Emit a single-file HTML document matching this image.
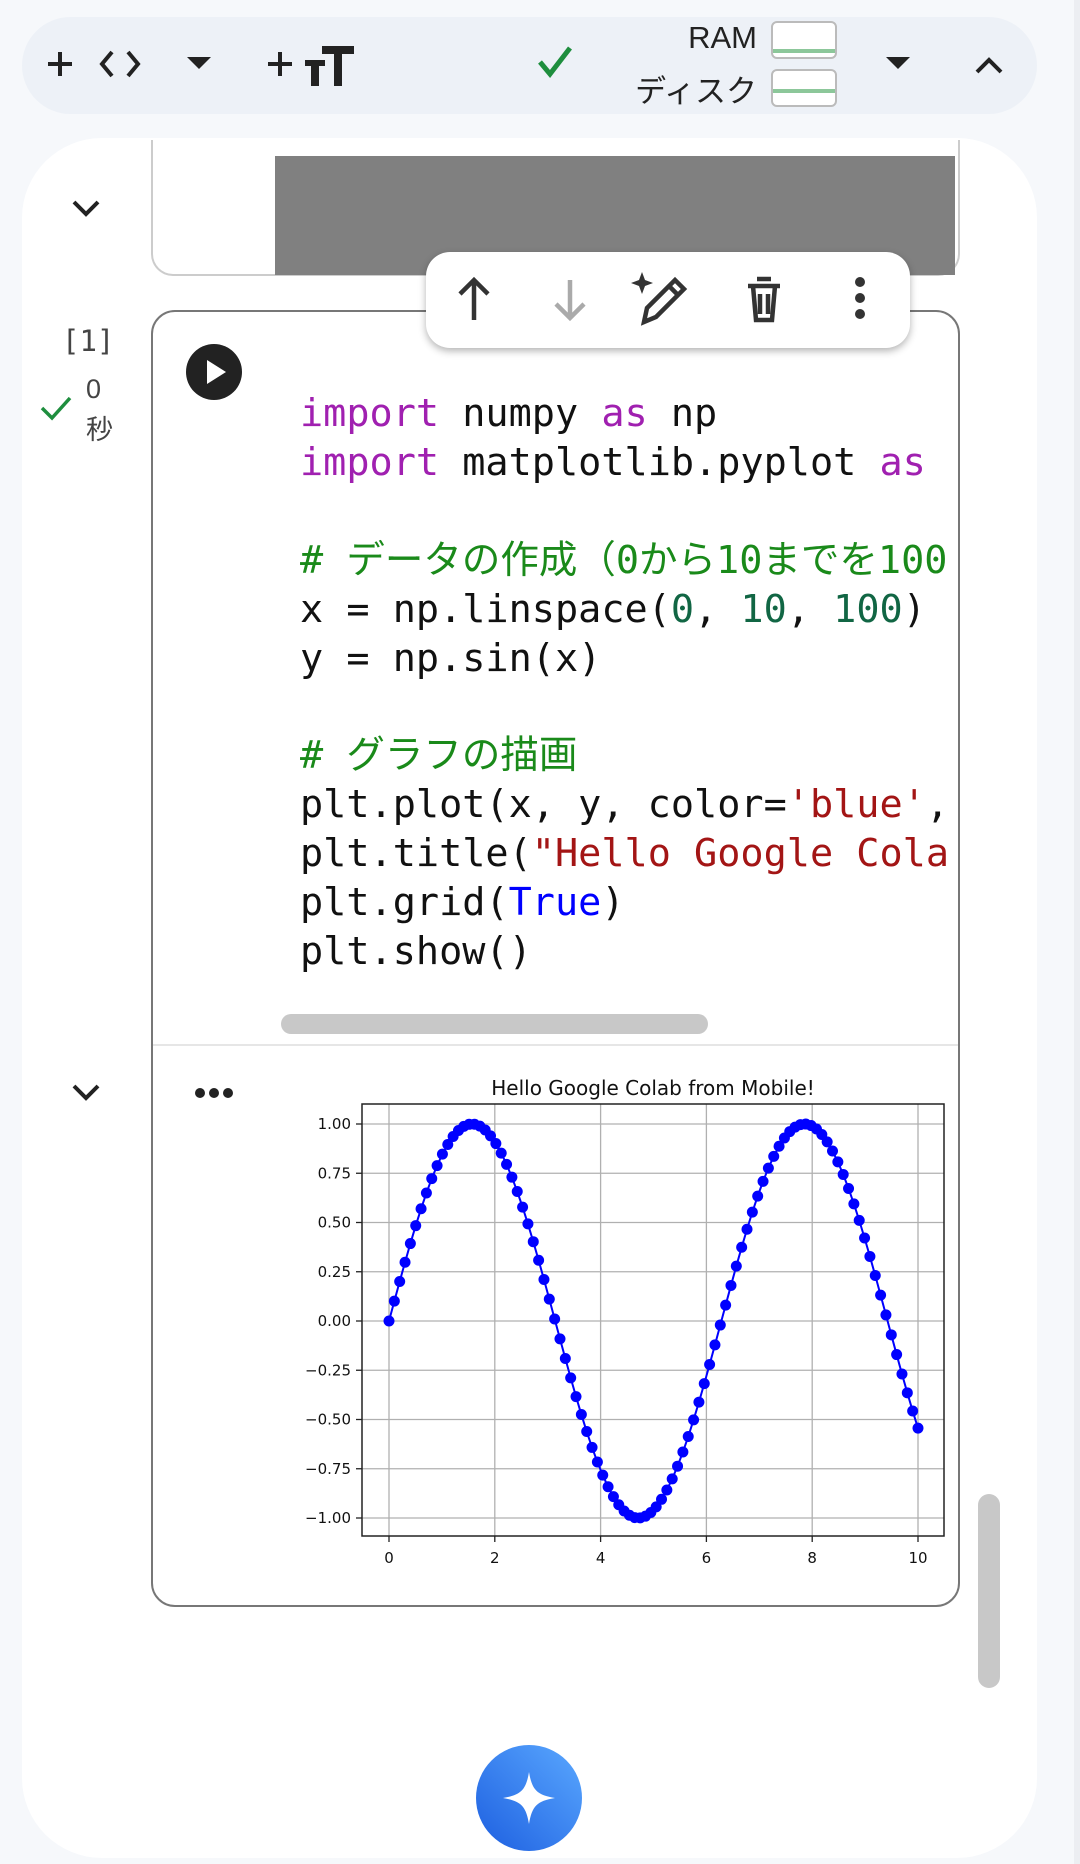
<!DOCTYPE html>
<html><head><meta charset="utf-8"><style>
*{margin:0;padding:0;box-sizing:border-box}
body{width:1080px;height:1864px;background:#f6f8fb;position:relative;overflow:hidden;font-family:"Liberation Sans","Noto Sans CJK JP",sans-serif;color:#222}
.abs{position:absolute}
.top{left:22px;top:17px;width:1015px;height:97px;border-radius:49px;background:#edf1f7}
.card{left:22px;top:138px;width:1015px;height:1720px;border-radius:80px;background:#fff}
.code{left:300px;top:390px;font-family:"DejaVu Sans Mono","Noto Sans CJK JP",monospace;font-size:38.5px;line-height:48.9px;white-space:pre;color:#111}
.k{color:#a020b0}.c{color:#1a8a1a}.n{color:#116644}.s{color:#a31515}.b{color:#0000ff}
</style></head><body>
<div class="abs" style="left:1074px;top:0;width:6px;height:1864px;background:#eceef2"></div>
<div class="abs top"></div>
<svg class="abs" style="left:0;top:0" width="1080" height="130">
<g stroke="#222" stroke-width="4" fill="none">
<path d="M48 64h24M60 52v24"/><path d="M112 52l-10 12 10 12M128 52l10 12-10 12"/>
<path d="M268 64h24M280 52v24"/>
<path d="M540 62l10 12 20-26" stroke="#1e8e3e" stroke-width="5"/>
<path d="M977 72l12-12 12 12" stroke-width="4"/>
</g>
<path d="M187 57h24l-12 12z M886 57h24l-12 12z" fill="#222"/>
<path d="M305 60h20v6h-6v20h-8v-20h-6z M322 46h32v8h-12v32h-8v-32h-12z" fill="#222"/>
<rect x="772" y="22" width="64" height="36" rx="5" fill="#fff" stroke="#bbb" stroke-width="2"/>
<rect x="773" y="49" width="62" height="4" fill="#8cc79a"/>
<rect x="772" y="70" width="64" height="36" rx="5" fill="#fff" stroke="#bbb" stroke-width="2"/>
<rect x="773" y="89" width="62" height="4" fill="#8cc79a"/>
</svg>
<div class="abs" style="right:323px;top:20px;font-size:31px">RAM</div>
<div class="abs" style="right:323px;top:66px;font-size:31px">ディスク</div>
<div class="abs card"></div>
<div class="abs" style="left:151px;top:140px;width:809px;height:136px;border:2px solid #ccc;border-top:none;border-radius:0 0 22px 22px"></div>
<div class="abs" style="left:275px;top:156px;width:680px;height:119px;background:#808080"></div>
<svg class="abs" style="left:0;top:0" width="200" height="1200"><g stroke="#222" stroke-width="4" fill="none"><path d="M74 202l12 12 12-12"/><path d="M74 1086l12 12 12-12"/><path d="M42 408l10 10 18-20" stroke="#1e8e3e" stroke-width="3.5"/></g></svg>
<div class="abs" style="left:151px;top:310px;width:809px;height:1297px;border:2.5px solid #777;border-radius:24px;background:#fff;overflow:hidden">
<div class="abs" style="left:0;top:732px;width:809px;height:2px;background:#e6e6e6"></div>
</div>
<div class="abs code"><span class="k">import</span> numpy <span class="k">as</span> np
<span class="k">import</span> matplotlib.pyplot <span class="k">as</span>

<span class="c"># データの作成（0から10までを100</span>
x = np.linspace(<span class="n">0</span>, <span class="n">10</span>, <span class="n">100</span>)
y = np.sin(x)

<span class="c"># グラフの描画</span>
plt.plot(x, y, color=<span class="s">'blue'</span>,
plt.title(<span class="s">"Hello Google Cola</span>
plt.grid(<span class="b">True</span>)
plt.show()</div>
<div class="abs" style="left:958px;top:380px;width:30px;height:640px;background:#fff"></div>
<div class="abs" style="left:957.5px;top:340px;width:2.5px;height:1240px;background:#777"></div>
<div class="abs" style="left:281px;top:1014px;width:427px;height:20px;border-radius:10px;background:#c8c8c8"></div>
<div class="abs" style="left:62px;top:324px;font-size:29px;color:#444;font-family:'DejaVu Sans Mono',monospace">[1]</div>
<div class="abs" style="left:86px;top:374px;font-size:27px;color:#444">0</div>
<div class="abs" style="left:86px;top:408px;font-size:27px;color:#444">秒</div>
<svg class="abs" style="left:186px;top:344px" width="56" height="56"><circle cx="28" cy="28" r="28" fill="#222"/><path d="M21 16v24l19-12z" fill="#fff"/></svg>
<div class="abs" style="left:426px;top:252px;width:484px;height:96px;border-radius:24px;background:#fff;box-shadow:0 3px 8px rgba(0,0,0,.3)"></div>
<svg class="abs" style="left:426px;top:252px" width="484" height="96"><g fill="none" stroke-width="4.5">
<path d="M48 68V28M34 42l14-14 14 14" stroke="#333"/>
<path d="M144 28v38M130 52l14 14 14-14" stroke="#aaa"/>
<path d="M218 70l3-14 28-28 9 9-28 28z M243 34l9 9" stroke="#333"/>
<path d="M322 34h32M327 34l3 34h16l3-34M331 27h14M334 42v20M342 42v20" stroke="#333"/></g>
<path d="M216 20l3 8 8 3-8 3-3 8-3-8-8-3 8-3z" fill="#333"/>
<circle cx="434" cy="30" r="5" fill="#333"/><circle cx="434" cy="46" r="5" fill="#333"/><circle cx="434" cy="62" r="5" fill="#333"/>
</svg>
<svg class="abs" style="left:0;top:0;width:1080px;height:1864px">
<circle cx="200" cy="1093" r="5" fill="#222"/><circle cx="214" cy="1093" r="5" fill="#222"/><circle cx="228" cy="1093" r="5" fill="#222"/>
<text x="653" y="1095" font-family="DejaVu Sans,sans-serif" font-size="20" text-anchor="middle" fill="#111">Hello Google Colab from Mobile!</text>
<g id="grid" stroke="#b0b0b0" stroke-width="1.3"></g>
<rect x="362" y="1104" width="582" height="432" fill="none" stroke="#222" stroke-width="1.5"/>
<g id="lab" font-family="DejaVu Sans,sans-serif" font-size="15" fill="#111"></g>
<polyline id="line" fill="none" stroke="#0000ff" stroke-width="2"/>
<g id="pts" fill="#0000ff"></g>
<rect x="978" y="1494" width="22" height="194" rx="11" fill="#c8c8c8"/>
<defs><linearGradient id="g" x1="0" y1="1" x2="1" y2="0"><stop offset="0" stop-color="#1d5fe0"/><stop offset="1" stop-color="#5aa8ff"/></linearGradient></defs>
<circle cx="529" cy="1798" r="53" fill="url(#g)"/>
<path d="M529 1772 C532 1790 537 1795 555 1798 C537 1801 532 1806 529 1824 C526 1806 521 1801 503 1798 C521 1795 526 1790 529 1772z" fill="#fff"/>
</svg>
<script>
var ns="http://www.w3.org/2000/svg";
function X(v){return 389+v*52.9}function Y(v){return 1321-v*197}
var g=document.getElementById('grid'),l=document.getElementById('lab');
function el(p,t,a,txt){var e=document.createElementNS(ns,t);for(var k in a)e.setAttribute(k,a[k]);if(txt)e.textContent=txt;p.appendChild(e);}
for(var i=0;i<=10;i+=2){el(g,'line',{x1:X(i),x2:X(i),y1:1104,y2:1536});el(l,'text',{x:X(i),y:1563,'text-anchor':'middle'},String(i));el(g,'line',{x1:X(i),x2:X(i),y1:1536,y2:1542,stroke:'#222'});}
for(var j=-4;j<=4;j++){var v=j*0.25;el(g,'line',{x1:362,x2:944,y1:Y(v),y2:Y(v)});el(g,'line',{x1:356,x2:362,y1:Y(v),y2:Y(v),stroke:'#222'});el(l,'text',{x:351,y:Y(v)+5,'text-anchor':'end'},(v<0?'\u2212':'')+Math.abs(v).toFixed(2));}
var pts='',pg=document.getElementById('pts');
for(var k=0;k<100;k++){var x=10*k/99,y=Math.sin(x);pts+=X(x)+','+Y(y)+' ';el(pg,'circle',{cx:X(x),cy:Y(y),r:5.5});}
document.getElementById('line').setAttribute('points',pts);
</script>
</body></html>
